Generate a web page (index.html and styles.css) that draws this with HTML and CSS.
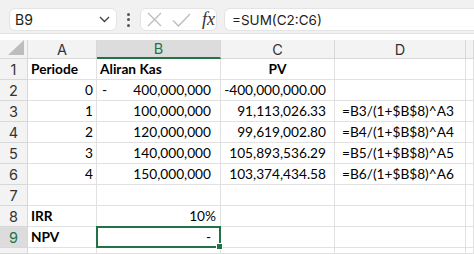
FILE: index.html
```html
<!DOCTYPE html>
<html lang="id">
<head>
    <meta charset="UTF-8">
    <title>NPV</title>
    <link rel="stylesheet" href="styles.css">
</head>
<body>
    <div class="toolbar">
        <div class="namebox">
            <span>B9</span>
            <svg width="11" height="7" viewBox="0 0 11 7"><path d="M1 1 L5.5 5.5 L10 1" fill="none" stroke="#444" stroke-width="1.4"/></svg>
        </div>
        <div class="dots"><i></i><i></i><i></i></div>
        <div class="fxbox">
            <svg width="15" height="15" viewBox="0 0 15 15"><path d="M1 1 L14 14 M14 1 L1 14" stroke="#bcbcbc" stroke-width="1.3" fill="none"/></svg>
            <svg width="19" height="14" viewBox="0 0 19 14"><path d="M1 7.5 L6.5 13 L18 1" stroke="#bcbcbc" stroke-width="1.3" fill="none"/></svg>
            <span class="fx">fx</span>
        </div>
        <div class="formula">=SUM(C2:C6)</div>
    </div>

    <div class="sheet">
        <div class="hd corner"><svg width="17" height="16" viewBox="0 0 17 16"><polygon points="16,0 16,15 0,15" fill="#bdbdbd"/></svg></div>
        <div class="hd">A</div>
        <div class="hd sel">B</div>
        <div class="hd">C</div>
        <div class="hd">D</div>
        <div class="hd"></div>

        <div class="rh">1</div>
        <div class="c b left">Periode</div>
        <div class="c b left">Aliran Kas</div>
        <div class="c b mid">PV</div>
        <div class="c"></div>
        <div class="c"></div>

        <div class="rh">2</div>
        <div class="c num">0</div>
        <div class="c acc"><span>-</span><span>400,000,000</span></div>
        <div class="c pv">-400,000,000.00</div>
        <div class="c"></div>
        <div class="c"></div>

        <div class="rh">3</div>
        <div class="c num">1</div>
        <div class="c acc"><span></span><span>100,000,000</span></div>
        <div class="c pv">91,113,026.33</div>
        <div class="c fm">=B3/(1+$B$8)^A3</div>
        <div class="c"></div>

        <div class="rh">4</div>
        <div class="c num">2</div>
        <div class="c acc"><span></span><span>120,000,000</span></div>
        <div class="c pv">99,619,002.80</div>
        <div class="c fm">=B4/(1+$B$8)^A4</div>
        <div class="c"></div>

        <div class="rh">5</div>
        <div class="c num">3</div>
        <div class="c acc"><span></span><span>140,000,000</span></div>
        <div class="c pv">105,893,536.29</div>
        <div class="c fm">=B5/(1+$B$8)^A5</div>
        <div class="c"></div>

        <div class="rh">6</div>
        <div class="c num">4</div>
        <div class="c acc"><span></span><span>150,000,000</span></div>
        <div class="c pv">103,374,434.58</div>
        <div class="c fm">=B6/(1+$B$8)^A6</div>
        <div class="c"></div>

        <div class="rh">7</div>
        <div class="c"></div>
        <div class="c"></div>
        <div class="c"></div>
        <div class="c"></div>
        <div class="c"></div>

        <div class="rh">8</div>
        <div class="c b left">IRR</div>
        <div class="c pct">10%</div>
        <div class="c"></div>
        <div class="c"></div>
        <div class="c"></div>

        <div class="rh selrow">9</div>
        <div class="c b left">NPV</div>
        <div class="c acc active"><span></span><span>-</span></div>
        <div class="c"></div>
        <div class="c"></div>
        <div class="c"></div>

        <div class="rh"></div>
        <div class="c"></div>
        <div class="c"></div>
        <div class="c"></div>
        <div class="c"></div>
        <div class="c"></div>
    </div>
</body>
</html>
```

FILE: styles.css
```css
body {
    margin: 0;
    width: 474px;
    height: 254px;
    overflow: hidden;
    background: #fff;
    font-family: 'Lato', sans-serif;
    color: #000;
}

/* barra de formula */
.toolbar {
    height: 34px;
    background: #f1f1f1;
    border-bottom: 1px solid #e2e2e2;
    display: flex;
    align-items: flex-start;
    padding-top: 8px;
    box-sizing: border-box;
    padding-left: 9px;
    margin-bottom: 6px;
}

.namebox, .fxbox, .formula {
    height: 23px;
    background: #fff;
    border: 1px solid #e4e4e4;
    border-radius: 6px;
    box-sizing: border-box;
    display: flex;
    align-items: center;
}

.namebox {
    width: 108px;
    justify-content: space-between;
    padding: 0 6px 0 5px;
    font-family: 'Inter', sans-serif;
    font-size: 14px;
    color: #222;
}

.dots {
    width: 23px;
    height: 23px;
    display: flex;
    flex-direction: column;
    align-items: center;
    justify-content: center;
    gap: 2.5px;
}

.dots i {
    width: 3px;
    height: 3px;
    border-radius: 50%;
    background: #555;
}

.fxbox {
    width: 77px;
    padding-left: 6px;
    gap: 10px;
}

.fx {
    font-family: 'Liberation Serif', serif;
    font-style: italic;
    font-size: 18px;
    color: #333;
    margin-left: 1px;
}

.formula {
    flex: 1;
    margin-left: 7px;
    padding-left: 7px;
    font-family: 'Inter', sans-serif;
    font-size: 13.5px;
    color: #222;
    border-right: none;
    border-radius: 6px 0 0 6px;
}

/* hoja */
.sheet {
    display: grid;
    grid-template-columns: 28px 69px 124px 114px 131px 8px;
    grid-template-rows: 19px repeat(9, 21px) 6px;
    font-size: 13.7px;
}

.hd, .rh {
    background: #f3f3f3;
    color: #333;
    font-family: 'Inter', sans-serif;
    font-size: 14.5px;
    display: flex;
    align-items: center;
    justify-content: center;
    border-right: 1px solid #d8d8d8;
    border-bottom: 1px solid #d8d8d8;
    box-sizing: border-box;
}

.corner {
    align-items: flex-end;
    justify-content: flex-end;
    padding: 0 2px 2px 0;
}

.hd.sel {
    background: #dcdcdc;
    color: #217346;
    border-bottom: 2px solid #217346;
}

.rh.selrow {
    background: #dcdcdc;
    color: #217346;
}

.c {
    border-right: 1px solid #e1e1e1;
    border-bottom: 1px solid #e1e1e1;
    box-sizing: border-box;
    display: flex;
    align-items: flex-end;
    padding-bottom: 2px;
    white-space: nowrap;
    position: relative;
}

.b {
    font-weight: bold;
}

.left {
    padding-left: 3px;
}

.mid {
    justify-content: center;
}

.num {
    justify-content: flex-end;
    padding-right: 3px;
}

.acc {
    justify-content: space-between;
    padding: 0 9px 2px 5px;
}

.pv {
    justify-content: flex-end;
    padding-right: 8px;
}

.pct {
    justify-content: flex-end;
    padding-right: 4px;
}

.fm {
    padding-left: 7px;
}

.active::after {
    content: "";
    position: absolute;
    left: -1px;
    top: -1px;
    right: -1px;
    bottom: -1px;
    border: 2px solid #217346;
}

.active::before {
    content: "";
    position: absolute;
    right: -3px;
    bottom: -3px;
    width: 5px;
    height: 5px;
    background: #217346;
    border: 1px solid #fff;
    z-index: 1;
}
```
